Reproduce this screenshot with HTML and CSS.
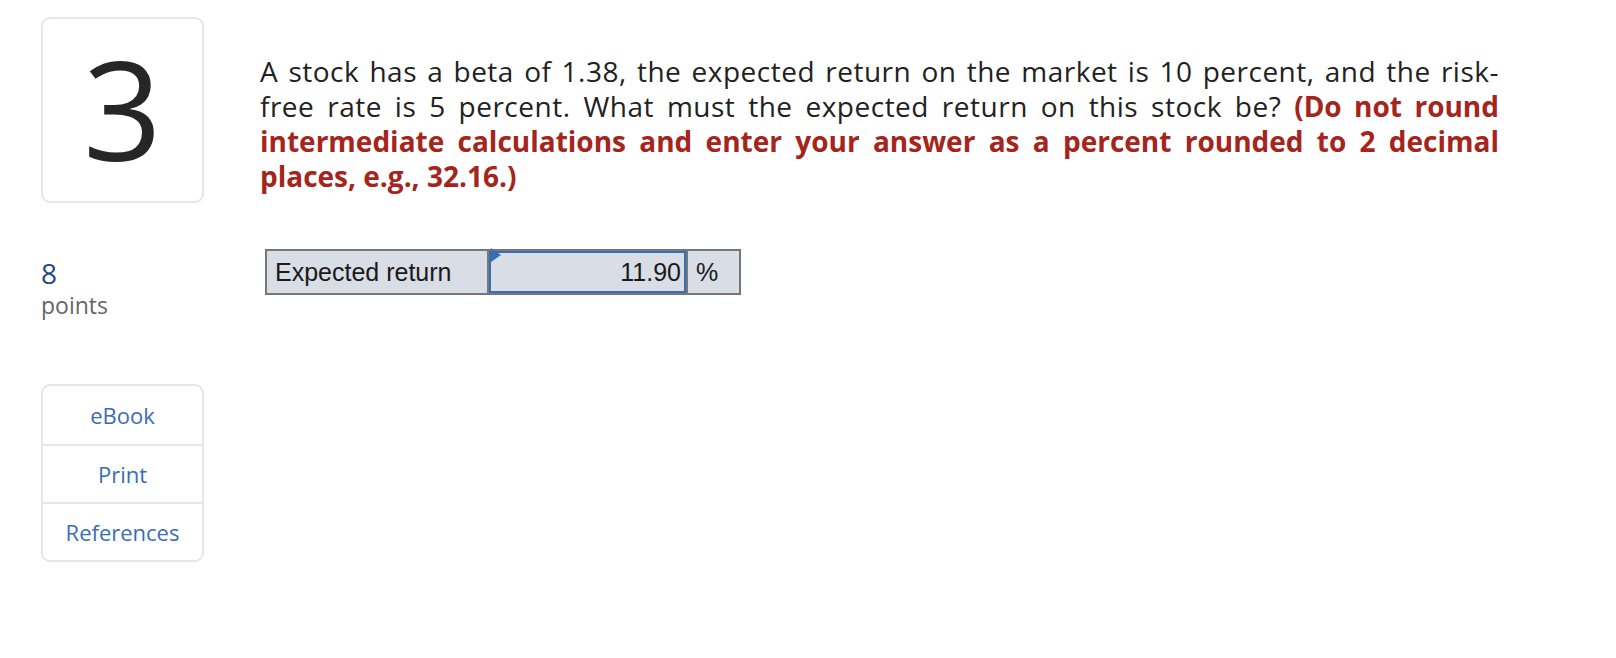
FILE: index.html
```html
<!DOCTYPE html>
<html lang="en">
<head>
    <meta charset="UTF-8">
    <title>Question 3</title>
    <link rel="stylesheet" href="styles.css">
</head>
<body>
    <div class="question-page">
        <aside class="question-side">
            <div class="question-number">3</div>

            <div class="question-points">
                <div class="points-value">8</div>
                <div class="points-label">points</div>
            </div>

            <ul class="question-tools">
                <li><a href="#">eBook</a></li>
                <li><a href="#">Print</a></li>
                <li><a href="#">References</a></li>
            </ul>
        </aside>

        <main class="question-body">
            <p class="question-text">
                A stock has a beta of 1.38, the expected return on the market is 10 percent, and the risk-free rate is 5 percent. What must the expected return on this stock be?
                <strong class="instructions">(Do not round intermediate calculations and enter your answer as a percent rounded to 2 decimal places, e.g., 32.16.)</strong>
            </p>

            <table class="answer-table">
                <tr>
                    <td class="answer-label">Expected return</td>
                    <td class="answer-input">
                        <span class="answer-flag"></span>
                        <input type="text" value="11.90">
                    </td>
                    <td class="answer-unit">%</td>
                </tr>
            </table>
        </main>
    </div>
</body>
</html>
```

FILE: styles.css
```css
:root {
    --text-color: #222222;
    --red-color: #a5251d;
    --link-color: #3b6db2;
    --points-color: #1d4b86;
    --muted-color: #666666;
    --card-border: #e6e6e6;
    --cell-bg: #d8dde6;
    --cell-border: #777777;
    --font-primary: 'Open Sans', 'Noto Sans', Arial, sans-serif;
}

* {
    margin: 0;
    padding: 0;
    box-sizing: border-box;
}

body {
    font-family: var(--font-primary);
    color: var(--text-color);
    background: white;
}

.question-page {
    display: flex;
    padding: 17px 0 0 41px;
}

.question-side {
    width: 163px;
    flex-shrink: 0;
}

.question-number {
    height: 186px;
    border: 2px solid var(--card-border);
    border-radius: 9px;
    display: flex;
    align-items: center;
    justify-content: center;
    font-size: 138px;
    font-weight: 400;
    color: #262626;
    line-height: 1;
    padding-bottom: 6px;
}

.question-points {
    margin-top: 55px;
}

.points-value {
    font-size: 28px;
    color: var(--points-color);
    line-height: 30px;
}

.points-label {
    font-size: 23px;
    color: var(--muted-color);
    line-height: 34px;
}

.question-tools {
    list-style: none;
    margin-top: 62px;
    border: 2px solid var(--card-border);
    border-radius: 9px;
}

.question-tools li {
    height: 58px;
    display: flex;
    align-items: center;
    justify-content: center;
    border-top: 2px solid var(--card-border);
}

.question-tools li:first-child {
    border-top: none;
}

.question-tools a {
    color: var(--link-color);
    text-decoration: none;
    font-size: 22px;
}

.question-body {
    margin-left: 56px;
    width: 1239px;
}

.question-text {
    margin-top: 37px;
    font-size: 28px;
    line-height: 35px;
    letter-spacing: 0.5px;
    text-align: justify;
}

.instructions {
    color: var(--red-color);
    font-weight: 700;
    letter-spacing: 0;
}

.answer-table {
    margin: 55px 0 0 5px;
    border-collapse: collapse;
    border: 2px solid var(--cell-border);
    font-family: 'Liberation Sans', Arial, sans-serif;
    font-size: 25px;
}

.answer-table td {
    background: var(--cell-bg);
    border: 2px solid var(--cell-border);
    height: 42px;
    padding: 0 8px;
    color: #1a1a1a;
}

.answer-label {
    width: 222px;
}

.answer-input {
    position: relative;
    width: 199px;
    padding: 0 !important;
}

.answer-input input {
    display: block;
    width: 100%;
    height: 42px;
    border: 2px solid var(--link-color);
    background: var(--cell-bg);
    font: inherit;
    color: #1a1a1a;
    text-align: right;
    padding-right: 3px;
}

.answer-flag {
    position: absolute;
    top: 2px;
    left: 2px;
    width: 0;
    height: 0;
    border-top: 7px solid transparent;
    border-bottom: 7px solid transparent;
    border-left: 10px solid var(--link-color);
    transform: translateY(-5px);
}

.answer-unit {
    width: 53px;
}
```
